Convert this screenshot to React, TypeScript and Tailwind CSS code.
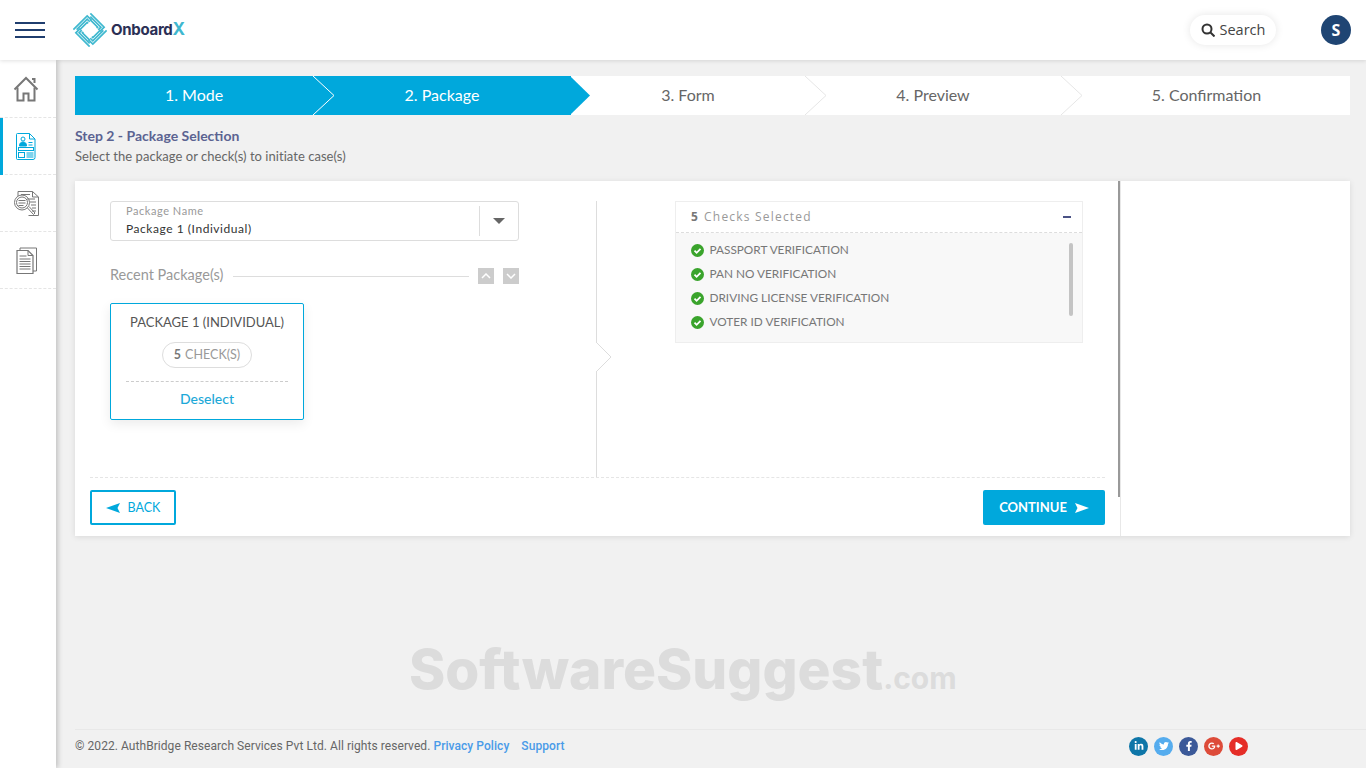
import { FaFacebookF, FaGooglePlusG, FaLinkedinIn, FaPlay, FaTwitter } from 'react-icons/fa'

const steps = [
  { label: '1. Mode', width: 'w-[238px]', active: true, chevron: 'white' },
  { label: '2. Package', width: 'w-[258px]', active: true, chevron: 'fill' },
  { label: '3. Form', width: 'w-[234px]', active: false, chevron: 'gray' },
  { label: '4. Preview', width: 'w-[256px]', active: false, chevron: 'gray' },
  { label: '5. Confirmation', width: 'w-[289px] pl-[2px]', active: false, chevron: '' },
]

const checks = ['PASSPORT VERIFICATION', 'PAN NO VERIFICATION', 'DRIVING LICENSE VERIFICATION', 'VOTER ID VERIFICATION']

const socials = [
  { icon: <FaLinkedinIn size={10} />, color: 'bg-[#0e76a8]' },
  { icon: <FaTwitter size={10} />, color: 'bg-[#55acee]' },
  { icon: <FaFacebookF size={10} />, color: 'bg-[#3b5998]' },
  { icon: <FaGooglePlusG size={12} />, color: 'bg-[#dd4b39]' },
  { icon: <FaPlay size={8} />, color: 'bg-[#e52d27]' },
]

function Logo() {
  // four striped bars wound round a square, turned 45deg
  const stripes = [0, 2.3, 4.6]
  return (
    <svg width="34" height="34" viewBox="0 0 34 34" fill="none" stroke="#3fb8cf" strokeWidth="1.700">
      <g transform="rotate(45 17 17)">
        {stripes.map((s) => (
          <g key={s}>
            <path d={`M${5.5 + s} ${5 + s}H${25 - s}V${11}`} />
            <path d={`M${29 - s} ${5.5 + s}V${25 - s}H${23}`} />
            <path d={`M${28.500 - s} ${29 - s}H${9 + s}V${23}`} />
            <path d={`M${5 + s} ${28.500 - s}V${9 + s}H${11}`} />
          </g>
        ))}
      </g>
    </svg>
  )
}

function HomeIcon() {
  return (
    <svg width="26" height="26" viewBox="0 0 26 26" fill="none" stroke="#777" strokeWidth="2">
      <path d="M1.500 13.500 13 2l11.500 11.500" />
      <path d="M4.500 11.500V24.500h6v-7h5v7h6V11.500" />
      <path d="M19 3h2.500v4" />
    </svg>
  )
}

function FormIcon() {
  return (
    <svg width="20" height="27" viewBox="0 0 20 27" fill="none" stroke="#00a8dc" strokeWidth="1">
      <path d="M1.500.5h12l5.500 5.500v18.500a2 2 0 0 1-2 2h-15.500a1 1 0 0 1-1-1v-24a1 1 0 0 1 1-1z" />
      <path d="M13.500.5v5.500h5.500" />
      <circle cx="7" cy="6" r="2" />
      <path d="M3.500 13c0-3 1.500-4 3.500-4s3.500 1 3.500 4z" fill="#00a8dc" />
      <path d="M12.500 9.500h4M12.500 12h4" />
      <rect x="2.500" y="14.500" width="15" height="3" />
      <rect x="2.500" y="19.500" width="6" height="5" />
      <path d="M10.500 20h7M10.500 22h7M10.500 24h7" strokeWidth="1.200" />
    </svg>
  )
}

function SearchDocIcon() {
  return (
    <svg width="27" height="27" viewBox="0 0 27 27" fill="none" stroke="#777" strokeWidth="1">
      <path d="M5 6V1.500h14.500l6 5.500v18.500h-10" />
      <path d="M19.500 1.500v5.500h6" />
      <path d="M8 4.500h9M14 9h8M17 12h6M18 15h5M19 18h4M19 21h4" />
      <circle cx="9" cy="12.500" r="7.500" />
      <circle cx="9" cy="12.500" r="5.500" />
      <path d="M5.500 10.500h7M5.500 13h7M5.500 15.500h5" />
      <path d="m14.500 18 6 6.500 1.500-1.500-6-6.500" />
    </svg>
  )
}

function DocsIcon() {
  return (
    <svg width="21" height="27" viewBox="0 0 21 27" fill="none" stroke="#777" strokeWidth="1">
      <path d="M4 3V1h16.500v23H17" />
      <path d="M1 3.500h11l5 5v18H1z" strokeWidth="1.200" />
      <path d="M12 3.500v5h5" />
      <path d="M3.500 9h7M3.500 12h11M3.500 14.500h11M3.500 17h11M3.500 19.500h11M3.500 22h11" />
    </svg>
  )
}

function CheckIcon() {
  return (
    <svg width="13" height="13" viewBox="0 0 13 13" className="shrink-0">
      <circle cx="6.500" cy="6.500" r="6.500" fill="#3aa42c" />
      <path d="m3.500 6.700 2.100 2.100 3.900-3.900" fill="none" stroke="#fff" strokeWidth="1.800" />
    </svg>
  )
}

function Plane({ back }: { back?: boolean }) {
  return (
    <svg width="14" height="10" viewBox="0 0 14 10" className={back ? 'rotate-180' : ''}>
      <path d="M0 0 14 5 0 10 2.500 5z" fill="currentColor" />
    </svg>
  )
}

function Stepper() {
  return (
    <div className="flex h-[39px] w-[1275px] bg-white">
      {steps.map((step) => (
        <div
          key={step.label}
          className={`relative flex items-center justify-center pb-[2px] text-[16px] ${step.width} ${step.active ? 'bg-[#00a8dc] text-white' : 'text-[#666]'}`}
        >
          {step.label}
          {step.chevron === 'white' && (
            <svg width="22" height="39" viewBox="0 0 22 39" fill="none" stroke="#fff" className="absolute left-full top-0 z-10">
              <path d="M0 0 21 19.500 0 39" />
            </svg>
          )}
          {step.chevron === 'fill' && (
            <svg width="20" height="39" viewBox="0 0 20 39" fill="#00a8dc" className="absolute left-[257px] top-0 z-10">
              <path d="M0 0 20 19.500 0 39z" />
            </svg>
          )}
          {step.chevron === 'gray' && (
            <svg width="22" height="39" viewBox="0 0 22 39" fill="none" stroke="#e6e6e6" className="absolute left-full top-0 z-10">
              <path d="M0 0 21 19.500 0 39" />
            </svg>
          )}
        </div>
      ))}
    </div>
  )
}

function PackageColumn() {
  return (
    <div className="w-[409px]">
      <div className="flex h-10 items-center rounded-[3px] border border-[#ddd] pl-[15px]">
        <div className="flex-1">
          <div className="-mt-[3px] text-[11px] leading-[13px] tracking-[0.55px] text-[#999]">Package Name</div>
          <div className="mt-[5px] text-[12px] leading-[14px] tracking-[0.55px] text-[#333]">Package 1 (Individual)</div>
        </div>
        <div className="flex h-[30px] w-[39px] items-center justify-center border-l border-[#ddd]">
          <div className="h-0 w-0 border-x-[6px] border-t-[6px] border-x-transparent border-t-[#666]" />
        </div>
      </div>

      <div className="mt-[27px] flex h-4 items-center">
        <span className="-mt-[3px] text-[14.500px] text-[#999]">Recent Package(s)</span>
        <div className="mr-[9px] ml-[10px] h-px flex-1 bg-[#ddd]" />
        <div className="flex gap-[9px]">
          <div className="flex h-4 w-4 items-center justify-center bg-[#ccc]">
            <svg width="10" height="6" viewBox="0 0 10 6" fill="none" stroke="#fff" strokeWidth="1.500"><path d="m1 5 4-4 4 4" /></svg>
          </div>
          <div className="flex h-4 w-4 items-center justify-center bg-[#ccc]">
            <svg width="10" height="6" viewBox="0 0 10 6" fill="none" stroke="#fff" strokeWidth="1.500"><path d="m1 1 4 4 4-4" /></svg>
          </div>
        </div>
      </div>

      <div className="mt-[19px] flex h-[117px] w-[194px] flex-col items-center rounded-[2px] border border-[#00a8dc] px-[15px] pt-[10px] shadow-[0_4px_12px_rgba(0,0,0,0.08)]">
        <div className="whitespace-nowrap text-[13px] leading-4 text-[#555]">PACKAGE 1 (INDIVIDUAL)</div>
        <div className="mt-[12px] flex h-[26px] w-[90px] items-center justify-center rounded-full border border-[#ddd] text-[12.500px] text-[#999]">
          <b className="mr-1 text-[#777]">5</b>CHECK(S)
        </div>
        <div className="mt-[13px] w-full border-t border-dashed border-[#ccc]" />
        <div className="mt-[8px] text-[14px] leading-[17px] font-medium text-[#1da9d8]">Deselect</div>
      </div>
    </div>
  )
}

function ChecksBox() {
  return (
    <div className="h-[142px] w-[408px] border border-[#eee]">
      <div className="flex h-[31px] items-center justify-between border-b border-dashed border-[#ddd] pr-[11px] pl-[15px] font-['Open_Sans',sans-serif] text-[12px] tracking-[1.200px] text-[#999]">
        <span><b className="mr-[5px] text-[#777]">5</b>Checks Selected</span>
        <div className="h-[2px] w-2 bg-[#4a5285]" />
      </div>
      <div className="relative h-[109px] bg-[#f8f8f8] pt-[5px] pl-[15px]">
        {checks.map((check) => (
          <div key={check} className="flex h-[24px] items-center gap-[5.500px] text-[11.800px] text-[#777]">
            <CheckIcon />
            {check}
          </div>
        ))}
        <div className="absolute top-[10px] right-[9px] h-[73px] w-1 rounded-full bg-[#c4c4c4]" />
      </div>
    </div>
  )
}

export default function App() {
  return (
    <div className="flex h-screen w-full flex-col overflow-hidden bg-[#f1f1f1] font-['Lato',sans-serif]">
      <header className="z-20 flex h-[60px] shrink-0 items-center bg-white pr-[15px] pl-[15px] shadow-[0_1px_4px_rgba(0,0,0,0.12)]">
        <div className="flex w-[30px] flex-col gap-[5px]">
          <div className="h-[2px] bg-[#1f3d6e]" />
          <div className="h-[2px] bg-[#1f3d6e]" />
          <div className="h-[2px] bg-[#1f3d6e]" />
        </div>
        <div className="ml-[28px] flex items-center gap-[4px]">
          <Logo />
          <span className="-mt-px font-['Inter',sans-serif] text-[15px] font-bold tracking-[-0.3px] text-[#2b2f55]">
            Onboard<span className="text-[17px] text-[#3fb8cf]">X</span>
          </span>
        </div>
        <div className="ml-auto flex h-[30px] w-[86px] items-center justify-center gap-[5px] rounded-full bg-white font-['Open_Sans',sans-serif] text-[14.500px] text-[#444] shadow-[0_0_8px_rgba(0,0,0,0.1)]">
          <svg width="14" height="14" viewBox="0 0 14 14" fill="none" stroke="#333" strokeWidth="2"><circle cx="6" cy="6" r="4.500" /><path d="m9.500 9.500 4 4" /></svg>
          Search
        </div>
        <div className="ml-[45px] flex h-[30px] w-[30px] items-center justify-center rounded-full bg-[#1f4573] font-['Open_Sans',sans-serif] text-[16px] font-bold text-white">S</div>
      </header>

      <div className="flex min-h-0 flex-1">
        <aside className="z-10 w-[56px] shrink-0 bg-white shadow-[2px_0_5px_rgba(0,0,0,0.2)]">
          <div className="flex h-[58px] items-center justify-center border-b border-dashed border-[#e5e5e5] pr-1"><HomeIcon /></div>
          <div className="relative flex h-[57px] items-center justify-center border-b border-dashed border-[#e5e5e5] pr-1">
            <div className="absolute top-0 left-0 h-[57px] w-[3px] bg-[#00a8dc]" />
            <FormIcon />
          </div>
          <div className="flex h-[57px] items-center justify-center border-b border-dashed border-[#e5e5e5] pr-1"><SearchDocIcon /></div>
          <div className="flex h-[57px] items-center justify-center border-b border-dashed border-[#e5e5e5] pr-1"><DocsIcon /></div>
        </aside>

        <main className="relative flex min-w-0 flex-1 flex-col pt-4 pl-[19px]">
          <Stepper />

          <h1 className="mt-[13px] text-[14px] leading-4 font-bold text-[#5b6391]">Step 2 - Package Selection</h1>
          <p className="mt-[4px] text-[13px] leading-4 tracking-[0.04px] text-[#666]">Select the package or check(s) to initiate case(s)</p>

          <section className="relative mt-[17px] flex h-[355px] w-[1275px] bg-white shadow-[0_1px_6px_rgba(0,0,0,0.1)]">
            <div className="flex w-[1046px] flex-col border-r border-[#e8e8e8]">
              <div className="flex h-[296px] pt-5 pl-[35px]">
                <PackageColumn />
                <div className="relative ml-[77px] w-px bg-[#ddd]">
                  <svg width="16" height="30" viewBox="0 0 16 30" className="absolute top-[141px] left-0">
                    <path d="M0 0 15 15 0 30z" fill="#fff" />
                    <path d="M0 0 15 15 0 30" fill="none" stroke="#ddd" />
                  </svg>
                </div>
                <div className="ml-[78px]"><ChecksBox /></div>
              </div>
              <div className="mx-[15px] border-t border-dashed border-[#e5e5e5]" />
              <div className="flex justify-between px-[15px] pt-[12px]">
                <button className="flex h-[35px] w-[86px] items-center justify-center gap-[8px] rounded-[2px] border-2 border-[#00a8dc] text-[12.500px] text-[#00a8dc]">
                  <Plane back />
                  <span className="pt-px">BACK</span>
                </button>
                <button className="flex h-[35px] w-[122px] items-center justify-center gap-[8px] rounded-[2px] bg-[#00a8dc] text-[13px] font-bold text-white">
                  CONTINUE
                  <Plane />
                </button>
              </div>
            </div>
            <div className="absolute top-0 left-[1043px] h-[316px] w-[2px] bg-[#999]" />
          </section>

          <div className="absolute top-[577px] left-[353px] whitespace-nowrap font-['Inter',sans-serif] text-[55px] leading-[64px] font-extrabold text-[#dcdcdc]">
            SoftwareSuggest<span className="text-[30px] font-bold">.com</span>
          </div>

          <footer className="mt-auto flex h-[39px] items-center justify-between border-t border-[#e8e8e8] pr-[118px] pb-[6px] font-['Roboto',sans-serif] text-[12px] tracking-[0.06px] text-[#666]">
            <div>
              © 2022. AuthBridge Research Services Pvt Ltd. All rights reserved.{' '}
              <a className="font-medium text-[#4a9be8]">Privacy Policy</a>
              <a className="ml-3 font-medium text-[#4a9be8]">Support</a>
            </div>
            <div className="flex gap-[6px]">
              {socials.map((social, i) => (
                <div key={i} className={`flex h-[19px] w-[19px] items-center justify-center rounded-full text-white ${social.color}`}>
                  {social.icon}
                </div>
              ))}
            </div>
          </footer>
        </main>
      </div>
    </div>
  )
}
